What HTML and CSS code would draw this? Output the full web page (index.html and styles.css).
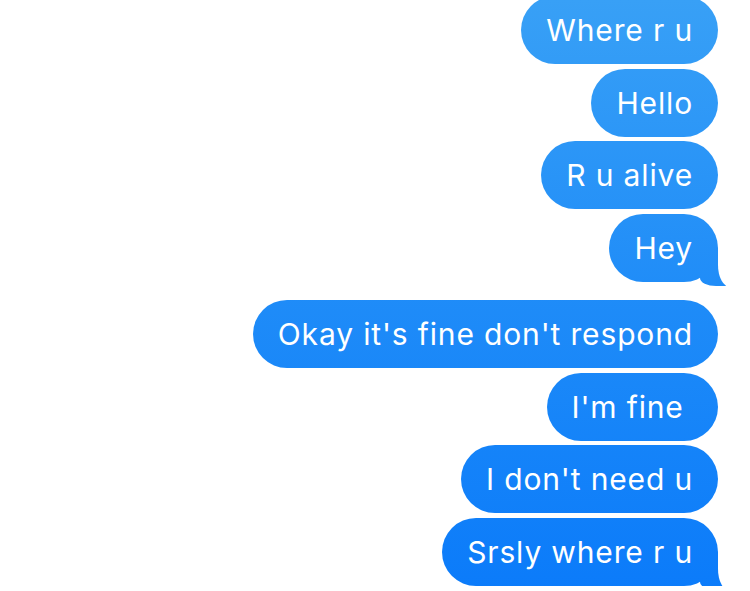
FILE: index.html
```html
<!DOCTYPE html>
<html>
<head>
<meta charset="utf-8">
<link rel="stylesheet" href="styles.css">
</head>
<body>
<div class="thread">
  <div class="group">
    <div class="bubble">Where r u</div>
    <div class="bubble">Hello</div>
    <div class="bubble">R u alive</div>
    <div class="bubble tail">Hey</div>
  </div>
  <div class="group">
    <div class="bubble">Okay it's fine don't respond</div>
    <div class="bubble">I'm fine </div>
    <div class="bubble">I don't need u</div>
    <div class="bubble tail">Srsly where r u</div>
  </div>
</div>
</body>
</html>
```
FILE: styles.css
```css
html, body {
  margin: 0;
  padding: 0;
  background: #ffffff;
}
.thread {
  display: flex;
  flex-direction: column;
  align-items: flex-end;
  gap: 18.5px;
  margin-top: -4px;
  padding-right: 32px;
}
.group {
  display: flex;
  flex-direction: column;
  align-items: flex-end;
  gap: 4.5px;
}
.bubble {
  position: relative;
  height: 68px;
  line-height: 68px;
  padding: 0 25px 0 25px;
  border-radius: 34px;
  color: #ffffff;
  font-family: Inter, "Liberation Sans", sans-serif;
  font-size: 30px;
  letter-spacing: 0.85px;
  white-space: pre;
  background: linear-gradient(to bottom, #38a0f6 0%, #1f8cf8 50%, #0b7bfa 100%) fixed;
}
.tail::before {
  content: "";
  position: absolute;
  right: -11px;
  bottom: -4px;
  width: 29px;
  height: 38px;
  background: linear-gradient(to bottom, #38a0f6 0%, #1f8cf8 50%, #0b7bfa 100%) fixed;
  border-bottom-left-radius: 16px 8px;
}
.tail::after {
  content: "";
  position: absolute;
  right: -32px;
  bottom: -5px;
  width: 32px;
  height: 40px;
  background: #ffffff;
  border-bottom-left-radius: 12px 22px;
}
```
